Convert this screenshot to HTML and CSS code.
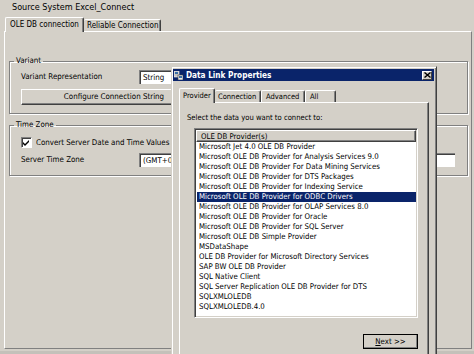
FILE: index.html
```html
<!DOCTYPE html>
<html>
<head>
    <title>Source System Excel_Connect</title>
    <link rel="stylesheet" href="styles.css">
</head>
<body>

    <div class="window">
        <div class="caption">Source System Excel_Connect</div>

        <div class="tabs">
            <div class="tab active main-first">OLE DB connection</div>
            <div class="tab main-second">Reliable Connection</div>
        </div>

        <div class="panel">
            <fieldset class="group">
                <legend>Variant</legend>
                <div class="row">
                    <span class="label">Variant Representation</span>
                    <div class="field select-field">String</div>
                </div>
                <div class="button config-button">Configure Connection String</div>
            </fieldset>

            <fieldset class="group timezone">
                <legend>Time Zone</legend>
                <div class="check-row">
                    <span class="checkbox">
                        <svg width="7" height="7" viewBox="0 0 7 7"><path d="M0 3 L2 5 L6 1 L6 3 L2 7 L0 5 Z" fill="#000"/></svg>
                    </span>
                    <span class="check-label">Convert Server Date and Time Values from Server Time Zone to Local Time</span>
                </div>
                <div class="row tz-row">
                    <span class="label">Server Time Zone</span>
                    <div class="field tz-field"><span class="tz-text">(GMT+01:00) Amsterdam, Berlin, Bern, Rome, Stockholm, Vienna</span></div>
                </div>
            </fieldset>
        </div>
    </div>

    <!-- Data Link Properties dialog sits over the main window -->
    <div class="dialog">
        <div class="titlebar">
            <svg class="title-icon" width="9" height="9" viewBox="0 0 9 9">
                <rect x="0" y="0" width="5" height="6" fill="#c0c0c0" stroke="#fff" stroke-width="0.6"/>
                <rect x="1" y="1" width="3" height="2" fill="#3a6ea5"/>
                <rect x="4" y="4" width="5" height="5" fill="#e8e8e8" stroke="#404040" stroke-width="0.6"/>
                <rect x="5" y="5" width="3" height="2" fill="#3a6ea5"/>
            </svg>
            <span class="title-text">Data Link Properties</span>
            <div class="close-button">
                <svg width="7" height="6" viewBox="0 0 7 6"><path d="M0.5 0.5 L6.5 5.5 M6.5 0.5 L0.5 5.5" stroke="#000" stroke-width="1.4"/></svg>
            </div>
        </div>

        <div class="dialog-body">
            <div class="tabs dialog-tabs">
                <div class="tab active tab-provider">Provider</div>
                <div class="tab tab-connection">Connection</div>
                <div class="tab tab-advanced">Advanced</div>
                <div class="tab tab-all">All</div>
            </div>

            <div class="dialog-panel">
                <div class="prompt">Select the data you want to connect to:</div>

                <div class="listbox">
                    <div class="list-header">OLE DB Provider(s)</div>
                    <div class="list-item">Microsoft Jet 4.0 OLE DB Provider</div>
                    <div class="list-item">Microsoft OLE DB Provider for Analysis Services 9.0</div>
                    <div class="list-item">Microsoft OLE DB Provider For Data Mining Services</div>
                    <div class="list-item">Microsoft OLE DB Provider for DTS Packages</div>
                    <div class="list-item">Microsoft OLE DB Provider for Indexing Service</div>
                    <div class="list-item selected">Microsoft OLE DB Provider for ODBC Drivers</div>
                    <div class="list-item">Microsoft OLE DB Provider for OLAP Services 8.0</div>
                    <div class="list-item">Microsoft OLE DB Provider for Oracle</div>
                    <div class="list-item">Microsoft OLE DB Provider for SQL Server</div>
                    <div class="list-item">Microsoft OLE DB Simple Provider</div>
                    <div class="list-item">MSDataShape</div>
                    <div class="list-item">OLE DB Provider for Microsoft Directory Services</div>
                    <div class="list-item">SAP BW OLE DB Provider</div>
                    <div class="list-item">SQL Native Client</div>
                    <div class="list-item">SQL Server Replication OLE DB Provider for DTS</div>
                    <div class="list-item">SQLXMLOLEDB</div>
                    <div class="list-item">SQLXMLOLEDB.4.0</div>
                </div>

                <div class="button-row">
                    <div class="button next-button"><u>N</u>ext &gt;&gt;</div>
                </div>
            </div>
        </div>
    </div>

</body>
</html>
```

FILE: styles.css
```css
html {
    background-color: #c4c1ba;
}
body {
    margin: 0;
    width: 474px;
    height: 354px;
    overflow: hidden;
    position: relative;
    font-family: "DejaVu Sans Condensed", "Liberation Sans", sans-serif;
    font-size: 7.9px;
    line-height: 10px;
    color: #000;
}
.window {
    background-color: #d4d0c8;
    height: 351px;
}
.caption {
    padding: 2px 0 0 12px;
    height: 15px;
    font-size: 9px;
}

/* tabs */
.tabs {
    display: flex;
    align-items: flex-end;
    height: 14px;
    padding-left: 5px;
}
.tab {
    box-sizing: border-box;
    height: 12px;
    padding: 1px 0 0 4px;
    border-top: 1px solid #fff;
    border-left: 1px solid #fff;
    border-right: 1px solid #404040;
    box-shadow: inset -1px 0 #808080;
    border-radius: 2px 2px 0 0;
    background-color: #d4d0c8;
    white-space: nowrap;
    overflow: hidden;
}
.tab.active {
    height: 15px;
    padding-top: 2px;
    margin-bottom: -1px;
    position: relative;
    z-index: 1;
}
.main-first {
    width: 79px;
    padding-left: 4px;
    font-size: 8px;
}
.main-second {
    width: 77px;
    border-left: none;
    padding-left: 3px;
    font-size: 8px;
}
.panel {
    box-sizing: border-box;
    margin-left: 4px;
    width: 468px;
    height: 318px;
    padding: 24px 3px 0 4px;
    border-top: 1px solid #fff;
    border-left: 1px solid #fff;
    border-right: 1px solid #808080;
    border-bottom: 1px solid #808080;
}

/* group boxes */
.group {
    margin: 0;
    min-width: 0;
    padding: 4px 8px 8px 11px;
    border: 1px solid #808080;
    box-shadow: inset 1px 1px #fff, 1px 1px #fff;
}
.group legend {
    padding: 0 2px;
    margin-left: -7px;
    line-height: 10px;
}
.timezone {
    margin-top: 6px;
    padding-top: 7px;
}
.row {
    display: flex;
    align-items: center;
    height: 14px;
}
.label {
    width: 118px;
    flex-shrink: 0;
}
.field {
    box-sizing: border-box;
    height: 14px;
    padding: 2px 0 0 3px;
    background-color: #fff;
    border-top: 1px solid #808080;
    border-left: 1px solid #808080;
    box-shadow: inset 1px 1px #404040;
    white-space: nowrap;
    overflow: hidden;
}
.select-field {
    width: 150px;
}
.tz-field {
    width: 316px;
}
.tz-text {
    display: inline-block;
    width: 28px;
    overflow: hidden;
    vertical-align: top;
}
.tz-row {
    margin-top: 5px;
}
.check-row {
    display: flex;
    align-items: center;
    height: 11px;
    white-space: nowrap;
}
.check-label {
    width: 134px;
    overflow: hidden;
}
.checkbox {
    box-sizing: border-box;
    width: 11px;
    height: 11px;
    margin-right: 4px;
    flex-shrink: 0;
    display: flex;
    align-items: center;
    justify-content: center;
    background-color: #fff;
    border-top: 1px solid #808080;
    border-left: 1px solid #808080;
    border-right: 1px solid #fff;
    border-bottom: 1px solid #fff;
    box-shadow: inset 1px 1px #404040;
}

/* buttons */
.button {
    box-sizing: border-box;
    display: flex;
    align-items: center;
    justify-content: center;
    background-color: #d4d0c8;
    border-top: 1px solid #fff;
    border-left: 1px solid #fff;
    border-right: 1px solid #404040;
    border-bottom: 1px solid #404040;
    box-shadow: inset -1px -1px #808080;
    white-space: nowrap;
}
.config-button {
    width: 186px;
    height: 16px;
    margin-top: 5px;
}

/* dialog */
.dialog {
    position: absolute;
    left: 171px;
    top: 66px;
    width: 266px;
    height: 300px;
    box-sizing: border-box;
    padding: 2px 2px 2px 1px;
    font-size: 7.8px;
    background-color: #d4d0c8;
    border-top: 1px solid #d4d0c8;
    border-left: 1px solid #d4d0c8;
    border-right: 1px solid #404040;
    border-bottom: 1px solid #404040;
    box-shadow: inset 1px 1px #fff, inset -1px -1px #808080;
}
.titlebar {
    display: flex;
    align-items: center;
    height: 12px;
    padding-left: 1px;
    background-color: #0a246a;
}
.title-icon {
    margin-right: 3px;
}
.title-text {
    color: #fff;
    font-weight: bold;
    font-size: 8.2px;
}
.close-button {
    box-sizing: border-box;
    width: 10px;
    height: 9px;
    margin-left: auto;
    margin-right: 2px;
    display: flex;
    align-items: center;
    justify-content: center;
    background-color: #d4d0c8;
    border-top: 1px solid #fff;
    border-left: 1px solid #fff;
    border-right: 1px solid #404040;
    border-bottom: 1px solid #404040;
}
.dialog-body {
    padding: 7px 0 0 6px;
}
.dialog-tabs {
    padding-left: 0;
}
.dialog-tabs .tab {
    font-size: 7.5px;
}
.tab-provider {
    width: 36px;
    padding-left: 3px;
}
.tab-connection {
    width: 46px;
    padding-left: 3px;
    border-left: none;
}
.tab-advanced {
    width: 44px;
    padding-left: 4px;
}
.tab-all {
    width: 31px;
    padding-left: 4px;
}
.dialog-panel {
    box-sizing: border-box;
    width: 250px;
    height: 260px;
    padding: 10px 0 0 7px;
    border-top: 1px solid #fff;
    border-left: 1px solid #fff;
    border-right: 1px solid #404040;
    box-shadow: inset -1px 0 #808080;
}
.prompt {
    height: 10px;
    font-size: 7.6px;
}
.listbox {
    box-sizing: border-box;
    width: 224px;
    height: 190px;
    margin: 5px 0 0 7px;
    background-color: #fff;
    border-top: 1px solid #808080;
    border-left: 1px solid #808080;
    border-right: 1px solid #fff;
    border-bottom: 1px solid #fff;
    box-shadow: inset 1px 1px #404040, inset -1px -1px #d4d0c8;
    padding: 1px;
}
.list-header {
    box-sizing: border-box;
    height: 12px;
    padding: 1px 0 0 4px;
    background-color: #d4d0c8;
    border-top: 1px solid #fff;
    border-left: 1px solid #fff;
    border-right: 1px solid #404040;
    border-bottom: 1px solid #404040;
    box-shadow: inset -1px -1px #808080;
}
.list-item {
    height: 10px;
    margin-left: 1px;
    padding-left: 2px;
    white-space: nowrap;
}
.list-item.selected {
    background-color: #0a246a;
    color: #fff;
}
.button-row {
    display: flex;
    justify-content: flex-end;
    width: 231px;
    margin-top: 16px;
}
.next-button {
    width: 55px;
    height: 15px;
    outline: 1px solid #000;
    outline-offset: -1px;
    border-top-color: #fff;
    border-left-color: #fff;
}
```
